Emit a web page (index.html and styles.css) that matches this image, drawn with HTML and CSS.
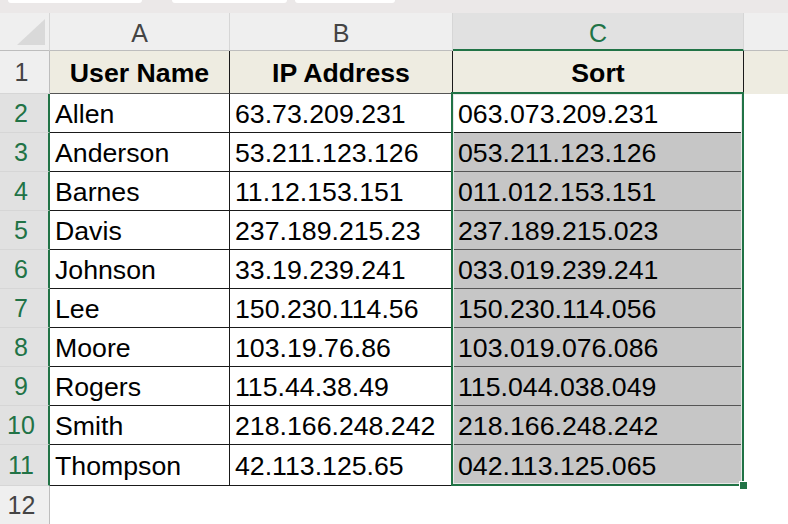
FILE: index.html
```html
<!DOCTYPE html>
<html>
<head>
<meta charset="utf-8">
<link rel="stylesheet" href="styles.css">
</head>
<body>
<div class="topbar">
  <div class="tab t1"></div>
  <div class="tab t2"></div>
  <div class="tab t3"></div>
</div>
<div class="sheet">
  <div class="corner"><svg width="32" height="30" viewBox="0 0 32 30"><polygon points="30,2 30,28 2,28" fill="#d9d9d9"/></svg></div>
  <div class="colhead">A</div>
  <div class="colhead">B</div>
  <div class="colhead sel">C</div>
  <div class="colhead rest"></div>

  <div class="rowhead">1</div>
  <div class="cell hdr">User Name</div>
  <div class="cell hdr">IP Address</div>
  <div class="cell hdr">Sort</div>
  <div class="fill beige"></div>

  <div class="rowhead sel">2</div>
  <div class="cell">Allen</div>
  <div class="cell">63.73.209.231</div>
  <div class="cell">063.073.209.231</div>
  <div class="fill"></div>

  <div class="rowhead sel">3</div>
  <div class="cell">Anderson</div>
  <div class="cell">53.211.123.126</div>
  <div class="cell shade">053.211.123.126</div>
  <div class="fill"></div>

  <div class="rowhead sel">4</div>
  <div class="cell">Barnes</div>
  <div class="cell">11.12.153.151</div>
  <div class="cell shade">011.012.153.151</div>
  <div class="fill"></div>

  <div class="rowhead sel">5</div>
  <div class="cell">Davis</div>
  <div class="cell">237.189.215.23</div>
  <div class="cell shade">237.189.215.023</div>
  <div class="fill"></div>

  <div class="rowhead sel">6</div>
  <div class="cell">Johnson</div>
  <div class="cell">33.19.239.241</div>
  <div class="cell shade">033.019.239.241</div>
  <div class="fill"></div>

  <div class="rowhead sel">7</div>
  <div class="cell">Lee</div>
  <div class="cell">150.230.114.56</div>
  <div class="cell shade">150.230.114.056</div>
  <div class="fill"></div>

  <div class="rowhead sel">8</div>
  <div class="cell">Moore</div>
  <div class="cell">103.19.76.86</div>
  <div class="cell shade">103.019.076.086</div>
  <div class="fill"></div>

  <div class="rowhead sel">9</div>
  <div class="cell">Rogers</div>
  <div class="cell">115.44.38.49</div>
  <div class="cell shade">115.044.038.049</div>
  <div class="fill"></div>

  <div class="rowhead sel">10</div>
  <div class="cell">Smith</div>
  <div class="cell">218.166.248.242</div>
  <div class="cell shade">218.166.248.242</div>
  <div class="fill"></div>

  <div class="rowhead sel">11</div>
  <div class="cell">Thompson</div>
  <div class="cell">42.113.125.65</div>
  <div class="cell shade">042.113.125.065</div>
  <div class="fill"></div>

  <div class="rowhead last">12</div>
  <div class="fill"></div>
  <div class="fill"></div>
  <div class="fill"></div>
  <div class="fill"></div>

  <div class="selection"><div class="handle"></div></div>
</div>
</body>
</html>
```
FILE: styles.css
```css
* { box-sizing: border-box; }
html, body { margin: 0; padding: 0; background: #fff; }
body { width: 788px; height: 524px; overflow: hidden; font-family: "Liberation Sans", Arial, sans-serif; }

.topbar {
  height: 13px;
  background: #ebe8e8;
  display: flex;
  align-items: flex-start;
}
.tab { height: 3px; background: #fff; border-radius: 0 0 4px 4px; }
.t1 { margin-left: 8px; width: 134px; }
.t2 { margin-left: 30px; width: 115px; }
.t3 { margin-left: 8px; width: 100px; }

.sheet {
  display: grid;
  grid-template-columns: 50px 180px 223px 291px 1fr;
  grid-template-rows: 38px 43px repeat(9, 39px) 41px 38px;
  position: relative;
}

.corner {
  background: #efefef;
  border-right: 1px solid #d6d6d6;
  border-bottom: 1px solid #bdbdbd;
  display: flex;
  align-items: flex-end;
  justify-content: flex-end;
  padding: 0 2px 3px 0;
}
.corner svg { display: block; }

.colhead {
  background: #efefef;
  border-right: 1px solid #d6d6d6;
  border-bottom: 1px solid #bdbdbd;
  color: #444;
  font-size: 25px;
  display: flex;
  align-items: center;
  justify-content: center;
  padding-top: 3px;
}
.colhead.sel {
  background: #e1e1e1;
  color: #217346;
  border-bottom: 2px solid #217346;
  padding-top: 4px;
}
.colhead.rest { border-right: none; }

.rowhead {
  background: #efefef;
  border-right: 1px solid #bdbdbd;
  border-bottom: 1px solid #d6d6d6;
  color: #444;
  font-size: 25px;
  display: flex;
  align-items: center;
  justify-content: center;
  padding-right: 6px;
}
.rowhead.sel {
  background: #e1e1e1;
  color: #217346;
  border-right: 2px solid #217346;
}
.rowhead.last { border-bottom: none; }

.cell {
  border-right: 1px solid #1a1a1a;
  border-bottom: 1px solid #1a1a1a;
  color: #000;
  font-size: 26.7px;
  display: flex;
  align-items: center;
  padding-left: 5px;
  padding-top: 2px;
  white-space: nowrap;
}
.cell.hdr {
  background: #eeece1;
  font-weight: bold;
  justify-content: center;
  padding-left: 0;
  border-bottom-color: #555;
}
.cell.shade { background: #c6c6c6; border-bottom-color: #555; }

.fill { background: #fff; }
.fill.beige { background: #eeece1; }

.selection {
  position: absolute;
  grid-column: 4 / 5;
  grid-row: 3 / 13;
  top: -2px;
  left: -2px;
  right: 0;
  bottom: 0;
  border: 2px solid #217346;
  box-shadow: inset 0 0 0 1px #e8e8e8;
  pointer-events: none;
}
.handle {
  position: absolute;
  right: -6px;
  bottom: -6px;
  width: 9px;
  height: 9px;
  background: #217346;
  border: 1px solid #fff;
}
```
